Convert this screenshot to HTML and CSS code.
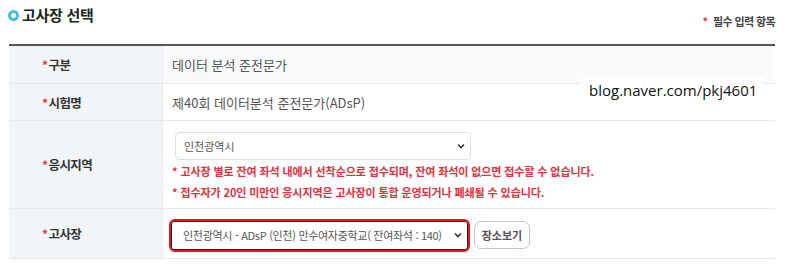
FILE: index.html
```html
<!DOCTYPE html>
<html lang="ko">
<head>
<meta charset="utf-8">
<link rel="stylesheet" href="styles.css">
</head>
<body>
<div class="page">
  <div class="head">
    <h2 class="title"><span class="ring"></span>고사장 선택</h2>
    <p class="req"><span class="star">*</span> 필수 입력 항목</p>
  </div>
  <div class="form">
    <div class="row r1">
      <div class="th"><span class="star">*</span>구분</div>
      <div class="td shade">데이터 분석 준전문가</div>
    </div>
    <div class="row r2">
      <div class="th"><span class="star">*</span>시험명</div>
      <div class="td">제40회 데이터분석 준전문가(ADsP)</div>
    </div>
    <div class="row r3">
      <div class="th"><span class="star">*</span>응시지역</div>
      <div class="td col">
        <div class="sel sel1">
          <span>인천광역시</span>
          <svg class="chev" width="8" height="6" viewBox="0 0 8 6"><path d="M1 1.5 L4 4.5 L7 1.5" fill="none" stroke="#333" stroke-width="1.6"/></svg>
        </div>
        <p class="note n1">* 고사장 별로 잔여 좌석 내에서 선착순으로 접수되며, 잔여 좌석이 없으면 접수할 수 없습니다.</p>
        <p class="note">* 접수자가 20인 미만인 응시지역은 고사장이 통합 운영되거나 폐쇄될 수 있습니다.</p>
      </div>
    </div>
    <div class="row r4">
      <div class="th"><span class="star">*</span>고사장</div>
      <div class="td">
        <div class="hl">
          <div class="sel sel2">
            <span>인천광역시 - ADsP (인천) 만수여자중학교( 잔여좌석 : 140)</span>
            <svg class="chev" width="8" height="6" viewBox="0 0 8 6"><path d="M1 1.5 L4 4.5 L7 1.5" fill="none" stroke="#333" stroke-width="1.6"/></svg>
          </div>
        </div>
        <button class="btn">장소보기</button>
      </div>
    </div>
  </div>
  <div class="mark">blog.naver.com/pkj4601</div>
</div>
</body>
</html>
```

FILE: styles.css
```css
* { box-sizing: border-box; }
html, body { margin: 0; padding: 0; background: #fff; }
body {
  width: 800px; height: 266px; overflow: hidden;
  font-family: "Noto Sans CJK KR", "Noto Sans", sans-serif;
  color: #444;
}
.page { position: relative; padding: 0 25px 0 9px; }
.head { display: flex; justify-content: space-between; align-items: flex-start; height: 44px; }
.title {
  margin: 4px 0 0 -1px; font-size: 15px; font-weight: 700; color: #222;
  display: flex; align-items: center; letter-spacing: -0.3px; line-height: 22px;
}
.ring {
  width: 11px; height: 11px; border-radius: 50%;
  border: 3px solid #3fbfdc; margin-right: 3px; margin-top: 1px;
}
.req { margin: 13px 0 0 0; font-size: 11px; font-weight: 700; color: #444; line-height: 16px; letter-spacing: -0.6px; }
.star { color: #e8333c; font-weight: 700; margin-right: 1px; }
.req .star { margin-right: 3px; }
.form { border-top: 2px solid #555; width: 766px; }
.row { display: flex; border-bottom: 1px solid #e7e9ec; }
.r1 { height: 38px; }
.r2 { height: 37px; }
.r3 { height: 88px; }
.r4 { height: 50px; }
.th {
  width: 153px; flex: none; background: #f2f5f8;
  display: flex; align-items: center; padding-left: 33px;
  font-size: 12.5px; font-weight: 700; color: #333; letter-spacing: -0.6px;
}
.th .star { font-size: 12px; margin-right: 1px; }
.td {
  flex: 1; display: flex; align-items: center; padding-left: 9px;
  font-size: 13px; color: #555; border-left: 1px solid #eceef1;
}
.td.shade { background: #f9fafc; }
.td.col { flex-direction: column; align-items: flex-start; justify-content: flex-start; padding-top: 11px; }
.sel {
  position: relative; display: flex; align-items: center;
  border: 1px solid #dcdfe4; border-radius: 4px; background: #fff;
  font-size: 11px; color: #555; padding-left: 8px; white-space: nowrap;
}
.sel1 { width: 296px; height: 28px; margin-left: 3px; }
.chev { position: absolute; right: 5px; top: 50%; margin-top: -3px; }
.note { margin: 0; font-size: 11px; font-weight: 700; color: #e6303d; line-height: 21px; letter-spacing: -0.1px; white-space: nowrap; }
.n1 { margin-top: 1px; }
.hl {
  border: 2.5px solid #e8111c; border-radius: 6px; padding: 0;
  width: 301px; height: 33px; margin-left: -3px; margin-top: 3px;
}
.sel2 {
  width: 100%; height: 100%; border: 1.5px solid #222; border-radius: 3px;
  padding-left: 11px; overflow: hidden; letter-spacing: -0.3px;
}
.btn {
  margin-left: 4px; margin-top: 3px; width: 56px; height: 28px;
  border: 1px solid #c4c7cc; border-radius: 7px; background: #fff;
  font-family: inherit; font-size: 11px; font-weight: 700; color: #555; padding: 0;
}
.mark {
  position: absolute; left: 581px; top: 77px; width: 183px; height: 26px;
  background: #fff; color: #111; font-family: "Open Sans", "Noto Sans", sans-serif;
  font-size: 15px; line-height: 26px; padding-left: 8px; letter-spacing: 0;
}
```
